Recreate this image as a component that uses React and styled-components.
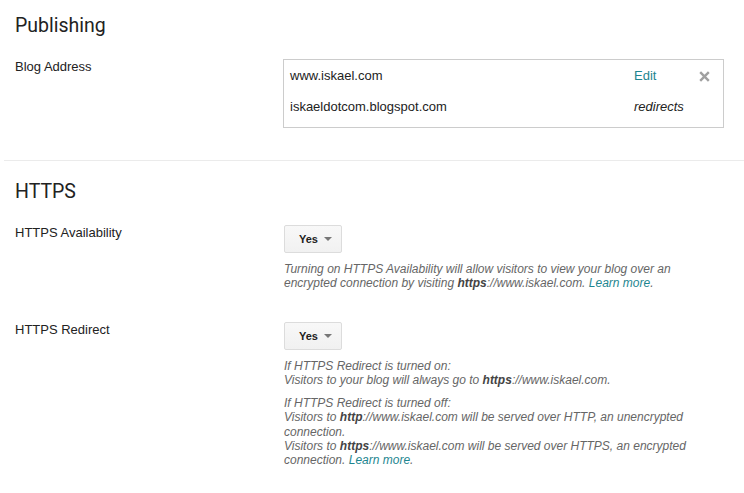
import React from "react";
import styled, { createGlobalStyle } from "styled-components";

const GlobalStyle = createGlobalStyle`
  body {
    margin: 0;
    background: #fff;
    font-family: Arial, "Liberation Sans", Helvetica, sans-serif;
    color: #222;
  }
`;

const Page = styled.div`
  padding: 0 0 20px 4px;
`;

const Section = styled.section`
  padding: ${(p) => (p.first ? "12px" : "17px")} 20px 0 11px;
`;

const Divider = styled.hr`
  margin: 32px 0 0;
  border: 0;
  border-top: 1px solid #ebebeb;
  height: 0;
`;

const Heading = styled.h2`
  margin: 0 0 19px;
  font-family: Roboto, "Open Sans", Arial, sans-serif;
  font-weight: 400;
  font-size: 19.5px;
  line-height: 28px;
  color: #222;
`;

const Row = styled.div`
  display: grid;
  grid-template-columns: 269px 1fr;
  align-items: start;
  margin-top: ${(p) => p.gap || 0}px;
`;

const Label = styled.div`
  font-size: 13px;
  line-height: 16px;
`;

const Field = styled.div`
  display: flex;
  flex-direction: column;
  align-items: flex-start;
`;

const AddressBox = styled.div`
  width: 441px;
  box-sizing: border-box;
  margin-left: -1px;
  border: 1px solid #ccc;
  padding: 8px 7px 12px 6px;
  display: grid;
  grid-template-columns: 1fr 58px 24px;
  row-gap: 15px;
  font-size: 13px;
  line-height: 16px;
`;

const Link = styled.a`
  color: #1d8690;
  text-decoration: none;
  cursor: pointer;
  font-style: ${(p) => (p.italic ? "italic" : "normal")};
`;

const Note = styled.span`
  font-style: italic;
`;

const Remove = styled.button`
  display: flex;
  align-items: center;
  justify-content: center;
  width: 24px;
  height: 16px;
  padding: 0;
  border: 0;
  background: none;
  cursor: pointer;
`;

const Dropdown = styled.button`
  display: flex;
  align-items: center;
  height: 28px;
  box-sizing: border-box;
  padding: 0 9px 0 14px;
  border: 1px solid #dcdcdc;
  border-radius: 2px;
  background: linear-gradient(#f8f8f8, #f1f1f1);
  font-family: Arial, "Liberation Sans", sans-serif;
  font-weight: bold;
  font-size: 11px;
  color: #222;
  cursor: pointer;
`;

const Caret = styled.span`
  margin-left: 6px;
  width: 0;
  height: 0;
  border-left: 4px solid transparent;
  border-right: 4px solid transparent;
  border-top: 4px solid #777;
`;

const Help = styled.div`
  margin-top: 9px;
  font-size: 12px;
  line-height: 14.3px;
  font-style: italic;
  color: #666;
  max-width: 415px;

  p {
    margin: 0 0 9px;
  }
  p:last-child {
    margin-bottom: 0;
  }
  b {
    color: #444;
  }
`;

const CloseIcon = () => (
  <svg width="11" height="11" viewBox="0 0 11 11">
    <path d="M1.2 1.2 L9.8 9.8 M9.8 1.2 L1.2 9.8" stroke="#a0a0a0" strokeWidth="2.4" />
  </svg>
);

const Select = ({ value }) => (
  <Dropdown type="button">
    {value}
    <Caret />
  </Dropdown>
);

export default function App() {
  return (
    <Page>
      <GlobalStyle />
      <Section first>
        <Heading>Publishing</Heading>
        <Row>
          <Label>Blog Address</Label>
          <AddressBox>
            <span>www.iskael.com</span>
            <Link>Edit</Link>
            <Remove type="button" aria-label="Remove">
              <CloseIcon />
            </Remove>
            <span>iskaeldotcom.blogspot.com</span>
            <Note>redirects</Note>
            <span />
          </AddressBox>
        </Row>
      </Section>
      <Divider />
      <Section>
        <Heading>HTTPS</Heading>
        <Row>
          <Label>HTTPS Availability</Label>
          <Field>
            <Select value="Yes" />
            <Help>
              <p>
                Turning on HTTPS Availability will allow visitors to view your blog over an
                encrypted connection by visiting <b>https</b>://www.iskael.com.{" "}
                <Link italic>Learn more</Link>.
              </p>
            </Help>
          </Field>
        </Row>
        <Row gap={31}>
          <Label>HTTPS Redirect</Label>
          <Field>
            <Select value="Yes" />
            <Help>
              <p>
                If HTTPS Redirect is turned on:
                <br />
                Visitors to your blog will always go to <b>https</b>://www.iskael.com.
              </p>
              <p>
                If HTTPS Redirect is turned off:
                <br />
                Visitors to <b>http</b>://www.iskael.com will be served over HTTP, an unencrypted
                connection.
                <br />
                Visitors to <b>https</b>://www.iskael.com will be served over HTTPS, an encrypted
                connection. <Link italic>Learn more</Link>.
              </p>
            </Help>
          </Field>
        </Row>
      </Section>
    </Page>
  );
}
